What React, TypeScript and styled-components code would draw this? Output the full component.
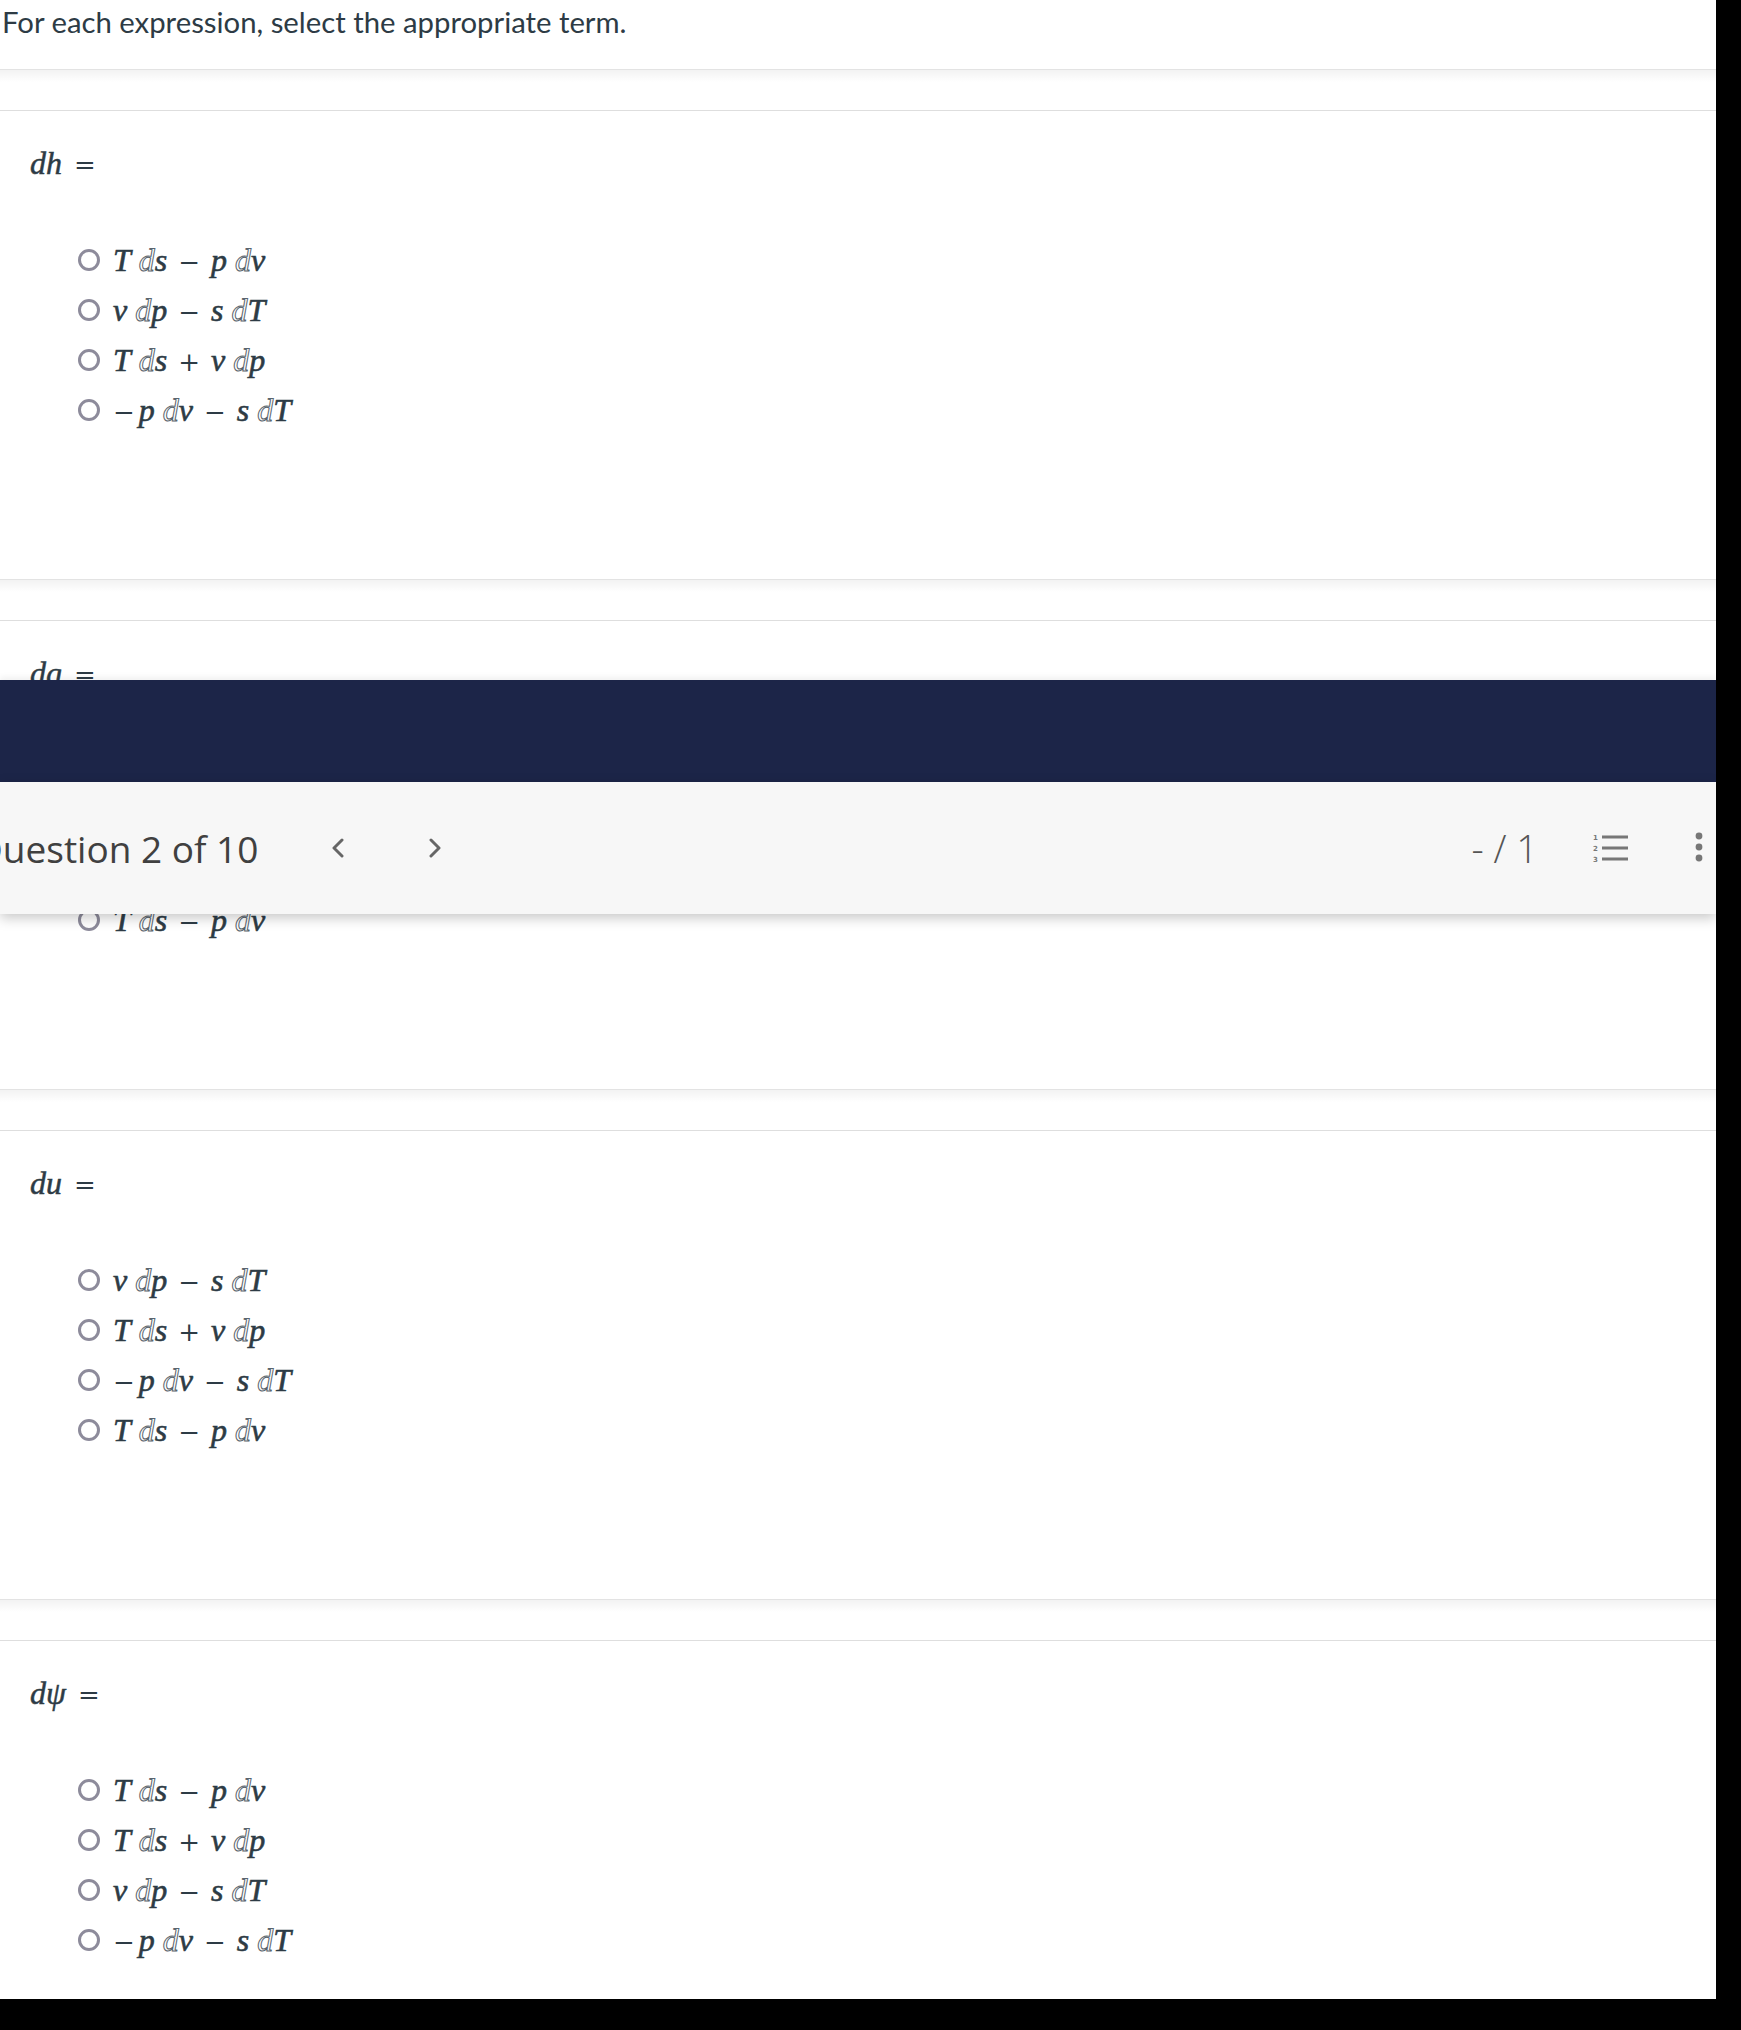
import React from 'react';
import styled, { createGlobalStyle } from 'styled-components';

const GlobalStyle = createGlobalStyle`
    html, body {
        margin: 0;
        padding: 0;
        background: #000;
    }
    body {
        font-family: Lato, "Noto Sans", sans-serif;
        color: #2d3b45;
    }
`;

const Viewport = styled.div`
    position: relative;
    width: 1716px;
    height: 1999px;
    overflow: hidden;
    background: #fff;
`;

const Title = styled.p`
    margin: 0;
    padding: 0 0 25px 2px;
    font-size: 29.3px;
    line-height: 44px;
    color: #2d3b45;
`;

const Divider = styled.div`
    box-sizing: border-box;
    height: 42px;
    border-top: 1px solid #e3e3e3;
    border-bottom: 1px solid #dedede;
    background: linear-gradient(to bottom, rgba(0, 0, 0, 0.05), rgba(0, 0, 0, 0) 12px);
`;

const Part = styled.section`
    box-sizing: border-box;
    height: 468px;
    padding: 32px 0 0 30px;
`;

const Label = styled.div`
    display: flex;
    align-items: baseline;
    height: 40px;
    font-family: "Liberation Serif", serif;
    font-size: 32px;
    line-height: 40px;
    color: #2d3b45;
    -webkit-text-stroke: 0.5px #2d3b45;
`;

const Options = styled.ul`
    list-style: none;
    margin: 52px 0 0;
    padding: 0 0 0 48px;
`;

const OptionRow = styled.li`
    display: flex;
    align-items: center;
    height: 50px;
    gap: 13px;
`;

const Radio = styled.span`
    box-sizing: border-box;
    flex: none;
    width: 22px;
    height: 22px;
    border: 3px solid #8d8b9b;
    border-radius: 50%;
`;

const Expr = styled.span`
    display: inline-flex;
    align-items: baseline;
    font-family: "Liberation Serif", serif;
    font-size: 32px;
    color: #2d3b45;
    -webkit-text-stroke: 0.6px #2d3b45;
`;

const Var = styled.span<{ $gap?: boolean }>`
    font-style: italic;
    margin-right: ${(p) => (p.$gap ? '8px' : '0')};
`;

const Hollow = styled.span`
    font-style: italic;
    color: #fff;
    -webkit-text-stroke: 1px #59646d;
`;

const Operator = styled.span`
    font-family: "DejaVu Serif", serif;
    font-size: 26px;
    -webkit-text-stroke: 0;
`;

const BinOp = styled(Operator)`
    margin: 0 11px;
`;

const NegOp = styled(Operator)`
    margin-right: 4px;
`;

const Equals = styled(Operator)`
    margin-left: 12px;
`;

const Header = styled.div`
    position: absolute;
    top: 680px;
    left: 0;
    right: 0;
    z-index: 2;
`;

const NavBand = styled.div`
    height: 102px;
    background: #1c2548;
    box-shadow: 0 -3px 6px rgba(0, 0, 0, 0.06);
`;

const QuestionBar = styled.div`
    display: flex;
    align-items: center;
    height: 132px;
    padding-right: 13px;
    background: #f7f7f7;
    box-shadow: 0 4px 12px rgba(0, 0, 0, 0.22);
    font-family: "Open Sans", "Noto Sans", sans-serif;
`;

const Counter = styled.span`
    margin-left: -26px;
    font-size: 37px;
    color: #404040;
    white-space: nowrap;
`;

const NavButton = styled.span<{ $first?: boolean }>`
    display: flex;
    margin-left: ${(p) => (p.$first ? '73px' : '83px')};
`;

const Tools = styled.div`
    display: flex;
    align-items: center;
    margin-left: auto;
`;

const Score = styled.span`
    font-size: 38px;
    font-weight: 300;
    color: #555;
    margin-right: 55px;
`;

const IconSlot = styled.span`
    display: flex;
    margin-right: 64px;
`;

const Chevron = ({ dir }: { dir: 'left' | 'right' }) => (
    <svg width="14" height="20" viewBox="0 0 14 20">
        <polyline
            points={dir === 'left' ? '11,2 3,10 11,18' : '3,2 11,10 3,18'}
            fill="none"
            stroke="#666"
            strokeWidth="3"
            strokeLinecap="round"
            strokeLinejoin="round"
        />
    </svg>
);

const NumberedList = () => (
    <svg width="38" height="30" viewBox="0 0 38 30">
        <g fill="#777" fontFamily="DejaVu Sans, sans-serif" fontSize="7" fontWeight="bold">
            <text x="0" y="7">1</text>
            <text x="0" y="18">2</text>
            <text x="0" y="29">3</text>
        </g>
        <rect x="9" y="2.5" width="26" height="3" fill="#777" />
        <rect x="9" y="13.5" width="26" height="3" fill="#777" />
        <rect x="9" y="24.5" width="26" height="3" fill="#777" />
    </svg>
);

const Kebab = () => (
    <svg width="8" height="32" viewBox="0 0 8 32">
        <circle cx="4" cy="4" r="3.4" fill="#777" />
        <circle cx="4" cy="15" r="3.4" fill="#777" />
        <circle cx="4" cy="26" r="3.4" fill="#777" />
    </svg>
);

const renderExpr = (src: string) =>
    src.split(' ').map((w, i) => {
        if (w === '-' || w === '+') return <BinOp key={i}>{w === '-' ? '−' : '+'}</BinOp>;
        if (w === 'neg') return <NegOp key={i}>−</NegOp>;
        if (w.length === 2 && w[0] === 'd') {
            return (
                <span key={i}>
                    <Hollow>d</Hollow>
                    <Var>{w[1]}</Var>
                </span>
            );
        }
        return <Var key={i} $gap>{w}</Var>;
    });

const parts = [
    { label: 'h', options: ['T ds - p dv', 'v dp - s dT', 'T ds + v dp', 'neg p dv - s dT'] },
    { label: 'g', options: ['v dp - s dT', 'neg p dv - s dT', 'T ds + v dp', 'T ds - p dv'] },
    { label: 'u', options: ['v dp - s dT', 'T ds + v dp', 'neg p dv - s dT', 'T ds - p dv'] },
    { label: 'ψ', options: ['T ds - p dv', 'T ds + v dp', 'v dp - s dT', 'neg p dv - s dT'] },
];

const App = () => (
    <>
        <GlobalStyle />
        <Viewport>
            <Title>For each expression, select the appropriate term.</Title>
            {parts.map((part) => (
                <React.Fragment key={part.label}>
                    <Divider />
                    <Part>
                        <Label>
                            <Var>d</Var>
                            <Var>{part.label}</Var>
                            <Equals>=</Equals>
                        </Label>
                        <Options>
                            {part.options.map((o) => (
                                <OptionRow key={o}>
                                    <Radio />
                                    <Expr>{renderExpr(o)}</Expr>
                                </OptionRow>
                            ))}
                        </Options>
                    </Part>
                </React.Fragment>
            ))}
            <Header>
                <NavBand />
                <QuestionBar>
                    <Counter>Question 2 of 10</Counter>
                    <NavButton $first>
                        <Chevron dir="left" />
                    </NavButton>
                    <NavButton>
                        <Chevron dir="right" />
                    </NavButton>
                    <Tools>
                        <Score>- / 1</Score>
                        <IconSlot>
                            <NumberedList />
                        </IconSlot>
                        <Kebab />
                    </Tools>
                </QuestionBar>
            </Header>
        </Viewport>
    </>
);

export default App;
